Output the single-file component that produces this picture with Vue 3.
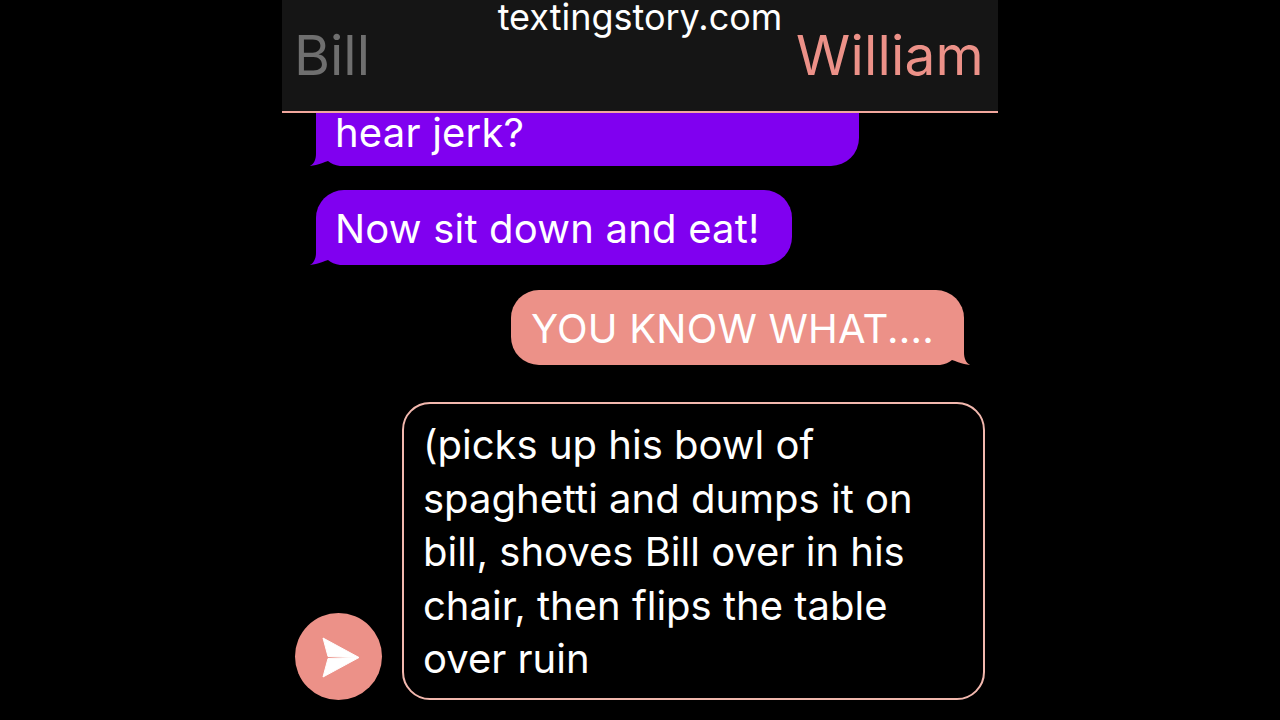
<script setup>
const thread = [
  { id: 1, from: 'them', text: 'hear jerk?', cls: 'clipped' },
  { id: 2, from: 'them', text: 'Now sit down and eat!', cls: '' },
  { id: 3, from: 'me', text: 'YOU KNOW WHAT....', cls: '' }
]
const draft = ['(picks up his bowl of', 'spaghetti and dumps it on', 'bill, shoves Bill over in his', 'chair, then flips the table', 'over ruin']
</script>

<template>
  <div class="phone">
    <header class="top">
      <div class="site">textingstory.com</div>
      <span class="name bill">Bill</span>
      <span class="name william">William</span>
    </header>

    <section class="thread">
      <div v-for="m in thread" :key="m.id" class="bubble" :class="[m.from, m.cls]">
        {{ m.text }}
        <svg class="tail" width="30" height="14" viewBox="0 0 30 14">
          <path class="wing" d="M6 2 C6 7 4 12 0 14 L6.5 14 Z" />
          <path class="notch" d="M0 14 C4 13.5 8 12.5 11 11.5 C14 10.5 16 9.5 18 9 C21 11.5 25 13.5 30 14 Z" />
        </svg>
      </div>
    </section>

    <footer class="composer">
      <button class="send">
        <svg width="44" height="44" viewBox="0 0 44 44">
          <path d="M5 3 L41 22.5 L10 21.5 Z" />
          <path d="M5 42 L41 22.5 L10 23.5 Z" />
        </svg>
      </button>
      <div class="draft">
        <div v-for="line in draft" :key="line">{{ line }}</div>
      </div>
    </footer>
  </div>
</template>

<style>
html, body { background: #000; }
</style>

<style scoped>
.phone {
  width: 716px;
  height: 720px;
  margin: 0 auto;
  display: flex;
  flex-direction: column;
  background: #000;
  font-family: Inter, "Liberation Sans", sans-serif;
  color: #fff;
  overflow: hidden;
}

.top {
  position: relative;
  z-index: 1;
  flex: none;
  box-sizing: border-box;
  height: 113px;
  background: #151515;
  border-bottom: 2px solid #f2a79d;
  display: flex;
  justify-content: space-between;
  align-items: flex-end;
  padding: 0 14px 26px 12px;
}

.site {
  position: absolute;
  top: 0;
  left: 0;
  right: 0;
  text-align: center;
  font-size: 36px;
  line-height: 34px;
}

.name {
  font-size: 55px;
  line-height: 60px;
}
.bill { color: #6f6f6f; }
.william { color: #ec9188; letter-spacing: 0.2px; }

.thread {
  flex: none;
  height: 252px;
  display: flex;
  flex-direction: column;
  justify-content: flex-end;
  gap: 25px;
  padding: 0 34px;
}

.bubble {
  position: relative;
  height: 75px;
  flex: none;
  box-sizing: border-box;
  padding: 0 32px 0 19px;
  border-radius: 28px;
  font-size: 40px;
  letter-spacing: 0.2px;
  line-height: 77px;
  width: fit-content;
  white-space: nowrap;
}

.them {
  background: #8000f0;
  align-self: flex-start;
  border-bottom-left-radius: 0;
}
.me {
  background: #ec9188;
  align-self: flex-end;
  padding: 0 30px 0 20px;
  border-bottom-right-radius: 0;
}

.clipped {
  width: 543px;
  height: 53px;
  line-height: 40px;
  margin-bottom: -1px;
  border-radius: 0 0 28px 0;
}

.tail {
  position: absolute;
  bottom: 0;
  left: -6px;
}
.them .wing { fill: #8000f0; }
.notch { fill: #000; }
.me .tail {
  left: auto;
  right: -6px;
  transform: scaleX(-1);
}
.me .wing { fill: #ec9188; }

.composer {
  flex: none;
  display: flex;
  align-items: flex-end;
  gap: 20px;
  padding: 37px 13px 20px 13px;
}

.send {
  width: 87px;
  height: 87px;
  flex: none;
  padding: 0;
  border: 0;
  border-radius: 50%;
  background: #ec9188;
  display: flex;
  align-items: center;
  justify-content: center;
}
.send svg { margin-left: 2px; }
.send path {
  fill: #fff;
  stroke: #fff;
  stroke-width: 1;
  stroke-linejoin: round;
}

.draft {
  box-sizing: border-box;
  width: 583px;
  height: 298px;
  border: 2px solid #f2b8ae;
  border-radius: 28px;
  padding: 14px 19px;
  font-size: 40px;
  line-height: 53.5px;
}
</style>
